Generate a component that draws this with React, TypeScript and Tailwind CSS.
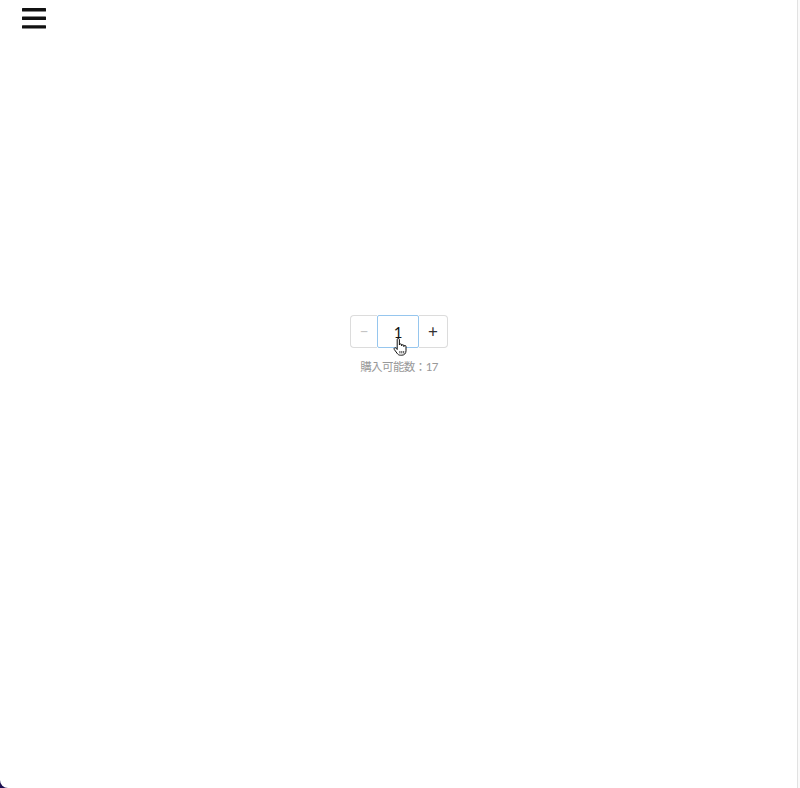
import { useState } from "react";

function MenuIcon() {
  return (
    <svg width="24" height="21" viewBox="0 0 24 21" aria-hidden="true">
      <rect x="0" y="0" width="24" height="3.4" rx="0.5" fill="#111" />
      <rect x="0" y="8.6" width="24" height="3.4" rx="0.5" fill="#111" />
      <rect x="0" y="17.2" width="24" height="3.4" rx="0.5" fill="#111" />
    </svg>
  );
}

function HandCursor() {
  return (
    <svg width="15" height="18" viewBox="0 0 15 18" className="pointer-events-none absolute left-[16px] top-[23px]" aria-hidden="true">
      <path
        d="M4.2 1.6a1.1 1.1 0 0 1 2.2 0V7a1.1 1.1 0 0 1 2.2 0v.8a1.1 1.1 0 0 1 2.2 0v.8a1.1 1.1 0 0 1 2.2 0v4.2c0 2.6-1.7 4.4-4.2 4.4H7.4c-1.6 0-2.6-.8-3.4-2L1.3 11.5a1.1 1.1 0 0 1 1.8-1.3l1.1 1.3Z"
        fill="#fff"
        stroke="#111"
        strokeWidth="1"
        strokeLinejoin="round"
      />
      <path d="M6.9 13v2.4M8.8 13v2.4M10.7 13v2.4" stroke="#111" strokeWidth="0.8" />
    </svg>
  );
}

export default function App() {
  const [qty, setQty] = useState(1);
  const max = 17;

  return (
    <div className="flex h-[788px] w-[800px] bg-[#1c1050] font-['Lato','Noto_Sans_CJK_JP',sans-serif]">
      <div className="flex flex-1 rounded-bl-[8px] bg-white">
        <div className="flex w-[797px] flex-col">
          <header className="flex h-[34px] items-start pl-[22px] pt-[8px]">
            <button type="button" aria-label="メニュー">
              <MenuIcon />
            </button>
          </header>

          <div className="mt-[281px] flex flex-col items-center pl-[1px]">
            <div className="flex h-[33px]">
              <button
                type="button"
                disabled={qty <= 1}
                onClick={() => setQty(qty - 1)}
                className="flex w-[27px] items-center justify-center rounded-l-[4px] border border-r-0 border-[#dcdcdc] text-[15px] text-[#c4c4c4]"
              >
                −
              </button>
              <div className="relative">
                <input
                  value={qty}
                  readOnly
                  className="h-[33px] w-[42px] rounded-[2px] border border-[#96c6ee] bg-white text-center text-[15px] text-[#111] outline-none"
                />
                <HandCursor />
              </div>
              <button
                type="button"
                disabled={qty >= max}
                onClick={() => setQty(qty + 1)}
                className="flex w-[29px] items-center justify-center rounded-r-[4px] border border-l-0 border-[#dcdcdc] text-[17px] text-[#333]"
              >
                +
              </button>
            </div>
            <p className="mt-[10px] text-[11.5px] tracking-[-0.6px] text-[#999]">購入可能数：{max}</p>
          </div>
        </div>
        <div className="w-px bg-[#e2e2e2]" />
        <div className="w-[2px] bg-[#fafafa]" />
      </div>
    </div>
  );
}
